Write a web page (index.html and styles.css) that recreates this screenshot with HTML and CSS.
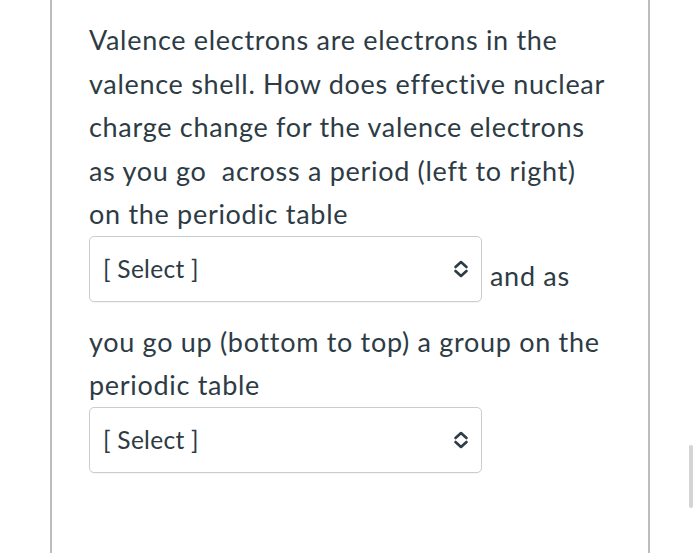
FILE: index.html
```html
<!DOCTYPE html>
<html>
<head>
<meta charset="utf-8">
<link rel="stylesheet" href="styles.css">
</head>
<body>
<div class="panel">
  <div class="content">
    <p class="text">Valence electrons are electrons in the<br>valence shell. How does effective nuclear<br>charge change for the valence electrons<br>as you go&nbsp; across a period (left to right)<br>on the periodic table</p>
    <div class="row">
      <div class="select">
        <span class="select-label">[ Select ]</span>
        <svg class="chev" width="16" height="20" viewBox="0 0 16 20"><path d="M2.5 8 L8 3 L13.5 8 M2.5 12 L8 17 L13.5 12" fill="none" stroke="#2d3b45" stroke-width="2.6" stroke-linecap="round" stroke-linejoin="round"/></svg>
      </div>
      <span class="after">and as</span>
    </div>
    <p class="text second">you go up (bottom to top) a group on the<br>periodic table</p>
    <div class="row">
      <div class="select">
        <span class="select-label">[ Select ]</span>
        <svg class="chev" width="16" height="20" viewBox="0 0 16 20"><path d="M2.5 8 L8 3 L13.5 8 M2.5 12 L8 17 L13.5 12" fill="none" stroke="#2d3b45" stroke-width="2.6" stroke-linecap="round" stroke-linejoin="round"/></svg>
      </div>
    </div>
  </div>
</div>
<div class="scrollbar"></div>
</body>
</html>
```
FILE: styles.css
```css
html, body {
  margin: 0;
  padding: 0;
  background: #ffffff;
}
body {
  font-family: Lato, "Open Sans", sans-serif;
  color: #2d3b45;
  width: 700px;
  height: 556px;
  overflow: hidden;
}
.panel {
  margin-left: 50px;
  width: 596px;
  height: 553px;
  border-left: 2px solid #bdbdbd;
  border-right: 2px solid #bdbdbd;
}
.content {
  padding: 18px 0 0 37px;
}
.text {
  margin: 0;
  white-space: nowrap;
  font-size: 27px;
  letter-spacing: 0.7px;
  line-height: 43.5px;
}
.second {
  margin-top: 18px;
}
.row {
  display: flex;
  align-items: flex-end;
}
.select {
  box-sizing: border-box;
  width: 393px;
  height: 66px;
  border: 1px solid #c7cdd1;
  border-radius: 5px;
  display: flex;
  align-items: center;
  justify-content: space-between;
  padding: 0 12px 0 13px;
  box-shadow: 0 1px 1px rgba(0,0,0,0.04);
}
.select-label {
  font-size: 24.5px;
  letter-spacing: 0.3px;
  line-height: 30px;
}
.chev {
  display: block;
}
.after {
  font-size: 27px;
  letter-spacing: 0.7px;
  line-height: 43.5px;
  margin-left: 8px;
  margin-bottom: 4px;
}
.scrollbar {
  position: absolute;
  left: 689px;
  top: 445px;
  width: 4px;
  height: 63px;
  border-radius: 2px;
  background: #d4d4d4;
}
```
